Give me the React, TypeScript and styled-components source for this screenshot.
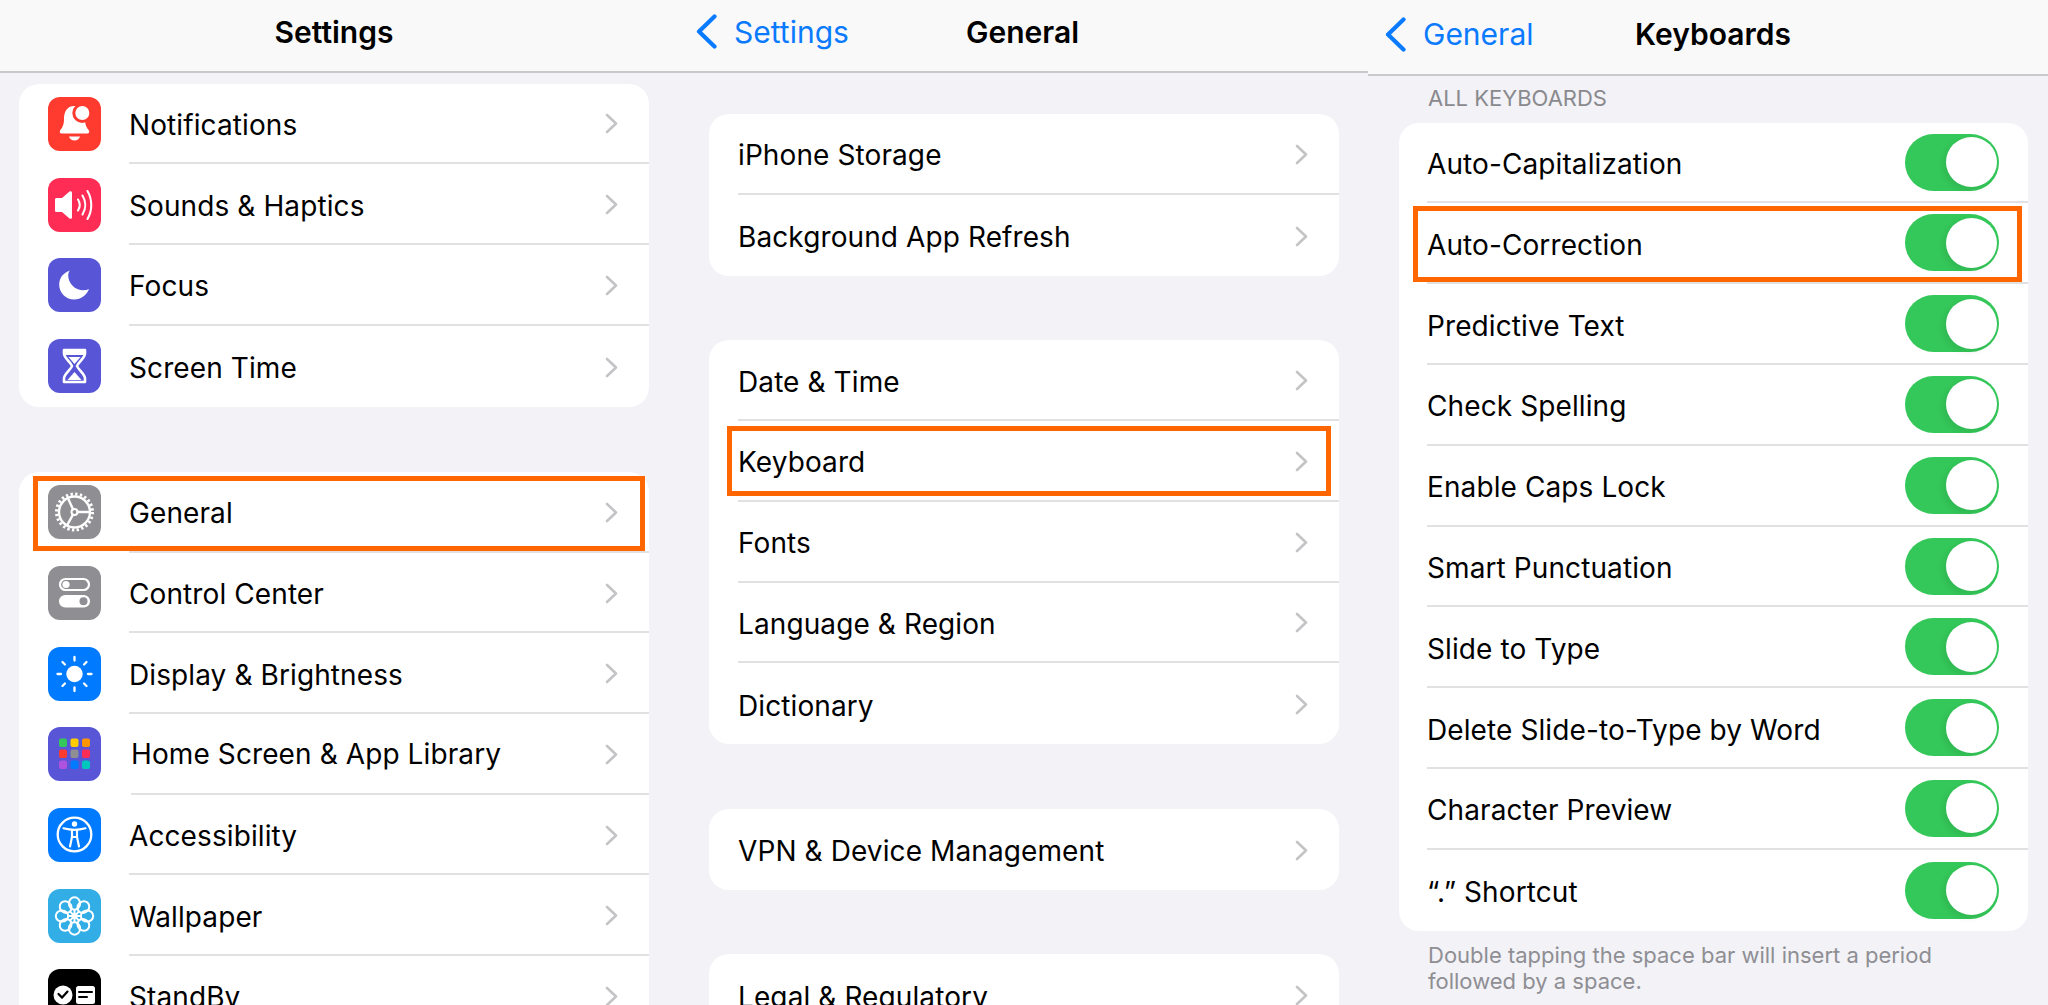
import React from "react";
import styled, { createGlobalStyle } from "styled-components";

const Global = createGlobalStyle`
  html, body { margin: 0; padding: 0; background: #f2f2f7; }
  body { font-family: Inter, "Noto Sans", "Liberation Sans", sans-serif; color: #000; }
  * { box-sizing: border-box; }
`;

const Screen = styled.div`
  display: flex;
  width: 2048px;
  height: 1005px;
  overflow: hidden;
  background: #f2f2f7;
`;

const Panel = styled.section<{ $width: number }>`
  flex: 0 0 ${(p) => p.$width}px;
  width: ${(p) => p.$width}px;
  display: flex;
  flex-direction: column;
`;

const NavBar = styled.header<{ $height: number; $left: number; $right: number; $lift: number }>`
  flex: 0 0 ${(p) => p.$height}px;
  display: grid;
  grid-template-columns: 1fr auto 1fr;
  align-items: center;
  padding: 0 ${(p) => p.$right}px ${(p) => p.$lift}px ${(p) => p.$left}px;
  background: linear-gradient(100deg, #f8f9f8, #f9f9f9);
  border-bottom: 2px solid #c9c9cb;
`;

const NavTitle = styled.h1`
  grid-column: 2;
  margin: 0;
  font-size: 30px;
  font-weight: 600;
  line-height: 36px;
`;

const BackLink = styled.a`
  grid-column: 1;
  grid-row: 1;
  display: flex;
  align-items: center;
  gap: 17px;
  color: #0a7aff;
  font-size: 30px;
  line-height: 36px;
`;

const Content = styled.div<{ $top: number; $left: number; $right: number; $gap: number }>`
  display: flex;
  flex-direction: column;
  gap: ${(p) => p.$gap}px;
  padding: ${(p) => p.$top}px ${(p) => p.$right}px 0 ${(p) => p.$left}px;
`;

const Card = styled.div`
  background: #fff;
  border-radius: 20px;
  flex: none;
`;

const Row = styled.div<{ $height: number; $inset: number }>`
  position: relative;
  display: flex;
  align-items: center;
  height: ${(p) => p.$height}px;
  padding-left: ${(p) => p.$inset}px;
`;

const RowBody = styled.div<{ $last?: boolean; $right: number; $nudge?: boolean }>`
  flex: 1;
  height: 100%;
  display: flex;
  align-items: center;
  justify-content: space-between;
  margin-left: ${(p) => (p.$nudge ? 2 : 0)}px;
  padding-right: ${(p) => p.$right}px;
  border-bottom: ${(p) => (p.$last ? "none" : "2px solid #e1e1e3")};
`;

const Label = styled.span<{ $nudge?: boolean }>`
  font-size: 28px;
  letter-spacing: 0.1px;
  line-height: 34px;
  white-space: nowrap;
  transform: translateY(${(p) => (p.$nudge ? 1 : 1.5)}px);
`;

const IconTile = styled.div<{ $bg: string }>`
  flex: 0 0 53px;
  width: 53px;
  height: 54px;
  margin-right: 28px;
  border-radius: 12px;
  background: ${(p) => p.$bg};
  overflow: hidden;
  & > svg {
    display: block;
  }
`;

const Highlight = styled.div<{ $t: number; $r: number; $b: number; $l: number }>`
  position: absolute;
  top: ${(p) => p.$t}px;
  right: ${(p) => p.$r}px;
  bottom: ${(p) => p.$b}px;
  left: ${(p) => p.$l}px;
  border: 5px solid #ff6600;
  pointer-events: none;
`;

const SectionLabel = styled.div`
  flex: none;
  margin: 10.5px 0 12.7px 29px;
  color: #8a8a8e;
  font-size: 22px;
  line-height: 24px;
`;

const Footnote = styled.p`
  margin: 11.5px 0 0 29px;
  color: #8e8e93;
  font-size: 22px;
  line-height: 26px;
`;

const Track = styled.div`
  flex: none;
  display: flex;
  justify-content: flex-end;
  align-items: center;
  width: 94px;
  height: 57px;
  padding-right: 2px;
  border-radius: 29px;
  background: #34c759;
`;

const Knob = styled.div`
  width: 51px;
  height: 50px;
  border-radius: 50%;
  background: #fff;
  box-shadow: -3px 3px 6px rgba(0, 0, 0, 0.08);
`;

const ChevronIcon = styled.svg`
  flex: none;
  transform: translateY(1px);
`;

const Chevron = () => (
  <ChevronIcon width="13" height="21" viewBox="0 0 13 21" fill="none" stroke="#c4c4c7" strokeWidth="2.6" strokeLinecap="round" strokeLinejoin="round">
    <polyline points="2,2 11,10.5 2,19" />
  </ChevronIcon>
);

const BackChevron = () => (
  <svg width="21" height="35" viewBox="0 0 21 35" fill="none" stroke="#0a7aff" strokeWidth="4.2" strokeLinecap="round" strokeLinejoin="round">
    <polyline points="18.5,2.5 3,17.5 18.5,32.5" />
  </svg>
);

const Glyph = ({ children }: { children: React.ReactNode }) => (
  <svg width="53" height="54" viewBox="0 0 53 54">{children}</svg>
);

const Bell = () => (
  <Glyph>
    <path d="M26.5 9c-8 0-10.5 6.5-10.5 13 0 5.5-1.4 8.4-3.6 11-1.2 1.4-.8 3.6 1.4 3.6h25.4c2.2 0 2.6-2.2 1.4-3.6-2.2-2.6-3.6-5.5-3.6-11 0-7-2.4-13-10.5-13z" fill="#fff" />
    <path d="M21 39.5h11c-.8 2.6-2.8 4-5.5 4s-4.7-1.4-5.5-4z" fill="#fff" />
    <circle cx="34.3" cy="16" r="10" fill="#ff3b30" />
    <circle cx="34.3" cy="16" r="7" fill="#fff" />
  </Glyph>
);

const Sound = () => (
  <Glyph>
    <path d="M7 21.5c0-1 .8-1.5 1.6-1.5H14L21.5 13.6c1-.9 2.5-.3 2.5 1.2v24.4c0 1.5-1.5 2.1-2.5 1.2L14 34H8.6C7.8 34 7 33.5 7 32.5z" fill="#fff" />
    <g fill="none" stroke="#fff" strokeWidth="2.1" strokeLinecap="round">
      <path d="M30 21.5c2.2 3.4 2.2 7.6 0 11" />
      <path d="M34.5 17.5c3.6 5.8 3.6 13.2 0 19" />
      <path d="M39.5 13c5 8.6 5 19.4 0 28" />
    </g>
  </Glyph>
);

const Moon = () => (
  <Glyph>
    <path d="M22 12.5c-6.6 2-10.8 7.6-10.8 14.2 0 8.2 6.8 14.8 15 14.8 6.8 0 12.4-4.2 14.8-10.4-1.6.8-3.6 1.2-5.6 1.2-8.6 0-15.2-6.8-15.2-15 0-1.8.6-3.4 1.8-4.8z" fill="#fff" />
  </Glyph>
);

const Hourglass = () => (
  <Glyph>
    <path d="M16 11h21v3.5c0 4.5-7 9-8 12.5 1 3.5 8 8 8 12.5V43H16v-3.5c0-4.5 7-9 8-12.5-1-3.5-8-8-8-12.5z" fill="none" stroke="#fff" strokeWidth="2.6" strokeLinejoin="round" />
    <path d="M16 11h21v5H16zM20.5 18h12l-6 7z" fill="#fff" />
    <path d="M26.5 33l7 8h-14z" fill="#fff" />
  </Glyph>
);

const Gear = () => (
  <Glyph>
    <circle cx="26.5" cy="27" r="18" fill="none" stroke="#fff" strokeWidth="3" strokeDasharray="2.36 2.36" />
    <circle cx="26.5" cy="27" r="15.5" fill="none" stroke="#fff" strokeWidth="2.4" />
    <circle cx="26.5" cy="27" r="3" fill="none" stroke="#fff" strokeWidth="2" />
    <g stroke="#fff" strokeWidth="2.4" strokeLinecap="round">
      <path d="M25 24.3L20.5 14.5" />
      <path d="M29.5 27H41" />
      <path d="M25 29.7L19.5 39.5" />
    </g>
  </Glyph>
);

const Switches = () => (
  <Glyph>
    <rect x="12" y="13" width="29" height="11" rx="5.5" fill="none" stroke="#fff" strokeWidth="2.2" />
    <circle cx="18" cy="18.5" r="3.6" fill="#fff" />
    <rect x="11" y="29" width="31" height="12.5" rx="6.25" fill="#fff" />
    <circle cx="35.5" cy="35.2" r="4" fill="#8e8e93" />
  </Glyph>
);

const Sun = () => (
  <Glyph>
    <circle cx="26.5" cy="27" r="8.2" fill="#fff" />
    <g stroke="#fff" strokeWidth="2.3" strokeLinecap="round">
      {[0, 45, 90, 135, 180, 225, 270, 315].map((a) => (
        <line key={a} x1="26.5" y1="13.5" x2="26.5" y2="10" transform={`rotate(${a} 26.5 27)`} />
      ))}
    </g>
  </Glyph>
);

const appDots = ["#34c759", "#ffcc00", "#ff9500", "#ff3b30", "#8e8e93", "#ff2d55", "#af52de", "#007aff", "#00c7be"];

const AppGrid = () => (
  <Glyph>
    {appDots.map((c, i) => (
      <rect key={c} x={11 + (i % 3) * 11.5} y={11.5 + Math.floor(i / 3) * 11} width="8" height="8.5" rx="2" fill={c} />
    ))}
  </Glyph>
);

const Person = () => (
  <Glyph>
    <circle cx="26.5" cy="26.5" r="16.8" fill="none" stroke="#fff" strokeWidth="2.3" />
    <circle cx="26.5" cy="16" r="2.7" fill="#fff" />
    <path d="M15.5 20.3c3.8 1 7.4 1.5 11 1.5s7.2-.5 11-1.5" fill="none" stroke="#fff" strokeWidth="2.2" strokeLinecap="round" />
    <path d="M24 22v7l-2 9.5M29 22v7l2 9.5M24 29h5" fill="none" stroke="#fff" strokeWidth="2.2" strokeLinecap="round" strokeLinejoin="round" />
  </Glyph>
);

const Flower = () => (
  <Glyph>
    <g fill="none" stroke="#fff" strokeWidth="2">
      {[0, 45, 90, 135, 180, 225, 270, 315].map((a) => (
        <g key={a} transform={`rotate(${a} 26.5 27)`}>
          <ellipse cx="26.5" cy="14.5" rx="5.6" ry="6.2" />
          <line x1="26.5" y1="20" x2="26.5" y2="25" />
        </g>
      ))}
    </g>
    <circle cx="26.5" cy="27" r="3" fill="#fff" />
  </Glyph>
);

const StandByGlyph = () => (
  <Glyph>
    <circle cx="15" cy="26" r="9.5" fill="#fff" />
    <path d="M10.5 25l3.6 3.6 5.4-6" fill="none" stroke="#000" strokeWidth="2.2" strokeLinecap="round" strokeLinejoin="round" />
    <rect x="28" y="17" width="19" height="18" rx="2.5" fill="#fff" />
    <path d="M31 23h13M31 28h8" stroke="#000" strokeWidth="2" strokeLinecap="round" />
    <rect x="28" y="37" width="19" height="14" rx="2.5" fill="#fff" />
  </Glyph>
);

type Inset = { t: number; r: number; b: number; l: number };

type SettingsItem = { label: string; bg: string; icon: React.ReactNode; height: number; nudge?: boolean; mark?: Inset; last?: boolean };

const groupA: SettingsItem[] = [
  { label: "Notifications", bg: "#ff3b30", icon: <Bell />, height: 80.8 },
  { label: "Sounds & Haptics", bg: "#ff2d55", icon: <Sound />, height: 80.8 },
  { label: "Focus", bg: "#5856d6", icon: <Moon />, height: 80.8 },
  { label: "Screen Time", bg: "#5856d6", icon: <Hourglass />, height: 80.8, last: true },
];

const groupB: SettingsItem[] = [
  { label: "General", bg: "#8e8e93", icon: <Gear />, height: 80.7, mark: { t: 4, r: 4, b: 2, l: 13.5 } },
  { label: "Control Center", bg: "#8e8e93", icon: <Switches />, height: 80.7 },
  { label: "Display & Brightness", bg: "#007aff", icon: <Sun />, height: 80.7 },
  { label: "Home Screen & App Library", bg: "#5856d6", icon: <AppGrid />, height: 80.7, nudge: true },
  { label: "Accessibility", bg: "#007aff", icon: <Person />, height: 80.7 },
  { label: "Wallpaper", bg: "#32ade6", icon: <Flower />, height: 80.7 },
  { label: "StandBy", bg: "#000", icon: <StandByGlyph />, height: 80.7 },
];

const IconRow = ({ item }: { item: SettingsItem }) => (
  <Row $height={item.height} $inset={29}>
    <IconTile $bg={item.bg}>{item.icon}</IconTile>
    <RowBody $last={item.last} $right={31} $nudge={item.nudge}>
      <Label $nudge={item.nudge}>{item.label}</Label>
      <Chevron />
    </RowBody>
    {item.mark && <Highlight $t={item.mark.t} $r={item.mark.r} $b={item.mark.b} $l={item.mark.l} />}
  </Row>
);

const LinkRow = ({ label, last, mark }: { label: string; last?: boolean; mark?: Inset }) => (
  <Row $height={80.8} $inset={29}>
    <RowBody $last={last} $right={31}>
      <Label>{label}</Label>
      <Chevron />
    </RowBody>
    {mark && <Highlight $t={mark.t} $r={mark.r} $b={mark.b} $l={mark.l} />}
  </Row>
);

const toggles: { label: string; mark?: Inset }[] = [
  { label: "Auto-Capitalization" },
  { label: "Auto-Correction", mark: { t: 2.5, r: 6, b: 2, l: 14 } },
  { label: "Predictive Text" },
  { label: "Check Spelling" },
  { label: "Enable Caps Lock" },
  { label: "Smart Punctuation" },
  { label: "Slide to Type" },
  { label: "Delete Slide-to-Type by Word" },
  { label: "Character Preview" },
  { label: "“.” Shortcut" },
];

export default function App() {
  return (
    <Screen>
      <Global />
      <Panel $width={668}>
        <NavBar $height={73} $left={0} $right={0} $lift={8}>
          <NavTitle>Settings</NavTitle>
        </NavBar>
        <Content $top={10.5} $left={19} $right={19} $gap={65.3}>
          <Card>
            {groupA.map((item) => (
              <IconRow key={item.label} item={item} />
            ))}
          </Card>
          <Card>
            {groupB.map((item) => (
              <IconRow key={item.label} item={item} />
            ))}
          </Card>
        </Content>
      </Panel>

      <Panel $width={700}>
        <NavBar $height={73} $left={28} $right={19} $lift={8}>
          <BackLink>
            <BackChevron />
            Settings
          </BackLink>
          <NavTitle>General</NavTitle>
        </NavBar>
        <Content $top={41} $left={41} $right={29} $gap={64.6}>
          <Card>
            <LinkRow label="iPhone Storage" />
            <LinkRow label="Background App Refresh" last />
          </Card>
          <Card>
            <LinkRow label="Date & Time" />
            <LinkRow label="Keyboard" mark={{ t: 5.5, r: 8, b: 6, l: 18 }} />
            <LinkRow label="Fonts" />
            <LinkRow label="Language & Region" />
            <LinkRow label="Dictionary" last />
          </Card>
          <Card>
            <LinkRow label="VPN & Device Management" last />
          </Card>
          <Card>
            <LinkRow label="Legal & Regulatory" last />
          </Card>
        </Content>
      </Panel>

      <Panel $width={680}>
        <NavBar $height={75.5} $left={17} $right={7} $lift={5.5}>
          <BackLink>
            <BackChevron />
            General
          </BackLink>
          <NavTitle>Keyboards</NavTitle>
        </NavBar>
        <Content $top={0} $left={31} $right={20} $gap={0}>
          <SectionLabel>ALL KEYBOARDS</SectionLabel>
          <Card>
            {toggles.map((t, i) => (
              <Row key={t.label} $height={80.8} $inset={28}>
                <RowBody $last={i === toggles.length - 1} $right={29}>
                  <Label>{t.label}</Label>
                  <Track>
                    <Knob />
                  </Track>
                </RowBody>
                {t.mark && <Highlight $t={t.mark.t} $r={t.mark.r} $b={t.mark.b} $l={t.mark.l} />}
              </Row>
            ))}
          </Card>
          <Footnote>
            Double tapping the space bar will insert a period
            <br />
            followed by a space.
          </Footnote>
        </Content>
      </Panel>
    </Screen>
  );
}
